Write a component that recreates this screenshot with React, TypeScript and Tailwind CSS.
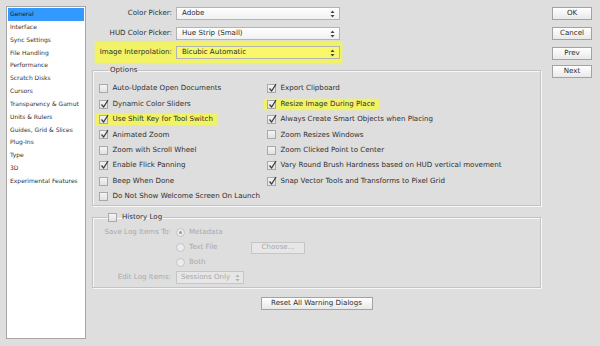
import React from "react";

const font = { fontFamily: '"DejaVu Sans", "Liberation Sans", sans-serif' };

const sidebarItems = [
  "General",
  "Interface",
  "Sync Settings",
  "File Handling",
  "Performance",
  "Scratch Disks",
  "Cursors",
  "Transparency & Gamut",
  "Units & Rulers",
  "Guides, Grid & Slices",
  "Plug-Ins",
  "Type",
  "3D",
  "Experimental Features",
];

const leftOptions: [string, boolean, boolean][] = [
  ["Auto-Update Open Documents", false, false],
  ["Dynamic Color Sliders", true, false],
  ["Use Shift Key for Tool Switch", true, true],
  ["Animated Zoom", true, false],
  ["Zoom with Scroll Wheel", false, false],
  ["Enable Flick Panning", true, false],
  ["Beep When Done", false, false],
  ["Do Not Show Welcome Screen On Launch", false, false],
];

const rightOptions: [string, boolean, boolean][] = [
  ["Export Clipboard", true, false],
  ["Resize Image During Place", true, true],
  ["Always Create Smart Objects when Placing", true, false],
  ["Zoom Resizes Windows", false, false],
  ["Zoom Clicked Point to Center", false, false],
  ["Vary Round Brush Hardness based on HUD vertical movement", true, false],
  ["Snap Vector Tools and Transforms to Pixel Grid", true, false],
];

function Arrows({ muted = false }: { muted?: boolean }) {
  const c = muted ? "#b0b0b0" : "#444";
  return (
    <svg width="5" height="8" viewBox="0 0 5 8">
      <path d="M2.5 0.5 L4.5 3 L0.5 3 Z" fill={c} />
      <path d="M2.5 7.5 L4.5 5 L0.5 5 Z" fill={c} />
    </svg>
  );
}

function Select({ value, yellow = false }: { value: string; yellow?: boolean }) {
  return (
    <div
      className={`flex h-[13px] w-[164px] items-center justify-between border border-[#b4b4b4] pl-[5px] pr-[4px] text-[7.1px] text-[#2b2b2b] ${
        yellow ? "bg-[#f8f86a]" : "bg-gradient-to-b from-white to-[#f1f1f1]"
      }`}
    >
      <span>{value}</span>
      <Arrows />
    </div>
  );
}

function Check({ checked }: { checked: boolean }) {
  return (
    <div className="relative h-[9px] w-[9px] shrink-0 border border-[#a9a9a9] bg-gradient-to-b from-[#f4f4f4] to-[#e2e2e2]">
      {checked && (
        <svg className="absolute left-[0px] top-[-2px]" width="9" height="10" viewBox="0 0 9 10">
          <path d="M1.5 5.5 L3.6 8 L8 1.2" fill="none" stroke="#3a3a3a" strokeWidth="1.2" />
        </svg>
      )}
    </div>
  );
}

function Option({ label, checked, hl }: { label: string; checked: boolean; hl: boolean }) {
  return (
    <div className="flex h-[15.4px] items-center">
      <div
        className={`flex h-[11px] items-center gap-[4.5px] ${
          hl ? "-ml-[3px] rounded-[1px] bg-[#f1f266] pl-[3px] pr-[4px] shadow-[0_0_2px_#f1f266]" : ""
        }`}
      >
        <Check checked={checked} />
        <span className="whitespace-nowrap text-[7.1px] text-[#2e2e2e]">{label}</span>
      </div>
    </div>
  );
}

function Radio({ on }: { on?: boolean }) {
  return (
    <div className="flex h-[9px] w-[9px] shrink-0 items-center justify-center rounded-full border border-[#c4c4c4] bg-[#ececec]">
      {on && <div className="h-[3px] w-[3px] rounded-full bg-[#9a9a9a]" />}
    </div>
  );
}

function Button({ label, className = "" }: { label: string; className?: string }) {
  return (
    <div
      className={`flex h-[13px] items-center justify-center border border-[#a3a3a3] bg-gradient-to-b from-white to-[#e9e9e9] text-[7.1px] text-[#2b2b2b] ${className}`}
    >
      {label}
    </div>
  );
}

const groove = "border border-[#c3c3c3] shadow-[inset_1px_1px_0_#f7f7f7,1px_1px_0_#f7f7f7]";

export default function App() {
  return (
    <div className="flex h-[346px] w-[600px] overflow-hidden bg-[#dedede]" style={font}>
      {/* Sidebar */}
      <div className="ml-[6px] mt-[6px] h-[333px] w-[80px] shrink-0 border border-[#a5a5a5] bg-white p-[1px]">
        {sidebarItems.map((item, i) => (
          <div
            key={item}
            className={`h-[12.85px] whitespace-nowrap pl-[2px] text-[6px] leading-[12.85px] ${
              i === 0 ? "bg-[#3399ff] text-[#1a1a1a]" : "text-[#333]"
            }`}
          >
            {item}
          </div>
        ))}
      </div>

      {/* Main */}
      <div className="ml-[6px] flex w-[449px] shrink-0 flex-col">
        <div className="mt-[5px] ml-[3px] flex h-[17px] w-[247px] items-center pr-[2px]">
          <div className="w-[77px] text-right text-[7.1px] text-[#2e2e2e]">Color Picker:</div>
          <div className="ml-[4px]">
            <Select value="Adobe" />
          </div>
        </div>
        <div className="mt-[3px] ml-[3px] flex h-[17px] w-[247px] items-center pr-[2px]">
          <div className="w-[77px] text-right text-[7.1px] text-[#2e2e2e]">HUD Color Picker:</div>
          <div className="ml-[4px]">
            <Select value="Hue Strip (Small)" />
          </div>
        </div>
        <div className="mt-[0px] ml-[3px] flex h-[21px] w-[247px] items-center rounded-[1px] bg-[#f1f266] pr-[2px] shadow-[0_0_3px_#f1f266]">
          <div className="w-[77px] whitespace-nowrap text-right text-[7.1px] text-[#2e2e2e]">Image Interpolation:</div>
          <div className="ml-[4px]">
            <Select value="Bicubic Automatic" yellow />
          </div>
        </div>

        {/* Options */}
        <fieldset className={`mt-[2px] h-[141px] px-[6px] pb-[3px] ${groove}`}>
          <legend className="ml-[10px] px-[1px] text-[7.1px] leading-[10px] text-[#2e2e2e]">Options</legend>
          <div className="mt-[6px] flex">
            <div className="w-[168px]">
              {leftOptions.map(([l, c, h]) => (
                <Option key={l} label={l} checked={c} hl={h} />
              ))}
            </div>
            <div>
              {rightOptions.map(([l, c, h]) => (
                <Option key={l} label={l} checked={c} hl={h} />
              ))}
            </div>
          </div>
        </fieldset>

        {/* History Log */}
        <fieldset className={`mt-[6px] h-[76px] ${groove}`}>
          <legend className="ml-[14px] flex items-center gap-[5px] px-[1px] text-[7.1px] leading-[10px] text-[#2e2e2e]">
            <div className="h-[9px] w-[9px] border border-[#a9a9a9] bg-gradient-to-b from-[#f4f4f4] to-[#e2e2e2]" />
            <span>History Log</span>
          </legend>
          <div className="mt-[3px] text-[7.1px] text-[#a9a9a9]">
            <div className="flex h-[15px] items-center">
              <div className="w-[78px] text-right">Save Log Items To:</div>
              <div className="ml-[5px] flex items-center gap-[4px]">
                <Radio on />
                <span>Metadata</span>
              </div>
            </div>
            <div className="flex h-[15px] items-center">
              <div className="w-[78px]" />
              <div className="ml-[5px] flex w-[75px] items-center gap-[4px]">
                <Radio />
                <span>Text File</span>
              </div>
              <div className="flex h-[12px] w-[54px] items-center justify-center border border-[#c6c6c6] bg-[#e6e6e6] text-[#a9a9a9]">
                Choose...
              </div>
            </div>
            <div className="flex h-[15px] items-center">
              <div className="w-[78px]" />
              <div className="ml-[5px] flex items-center gap-[4px]">
                <Radio />
                <span>Both</span>
              </div>
            </div>
            <div className="flex h-[15px] items-center">
              <div className="w-[78px] text-right">Edit Log Items:</div>
              <div className="ml-[5px] flex h-[13px] w-[68px] items-center justify-between whitespace-nowrap border border-[#c6c6c6] bg-[#e6e6e6] pl-[4px] pr-[3px]">
                <span>Sessions Only</span>
                <Arrows muted />
              </div>
            </div>
          </div>
        </fieldset>

        <div className="mt-[9px] flex justify-center">
          <Button label="Reset All Warning Dialogs" className="w-[112px]" />
        </div>
      </div>

      {/* Right buttons */}
      <div className="ml-[11px] mt-[7px] flex w-[40px] flex-col gap-[7px]">
        <Button label="OK" />
        <Button label="Cancel" />
        <Button label="Prev" />
        <Button label="Next" className="-mt-[2px]" />
      </div>
    </div>
  );
}
